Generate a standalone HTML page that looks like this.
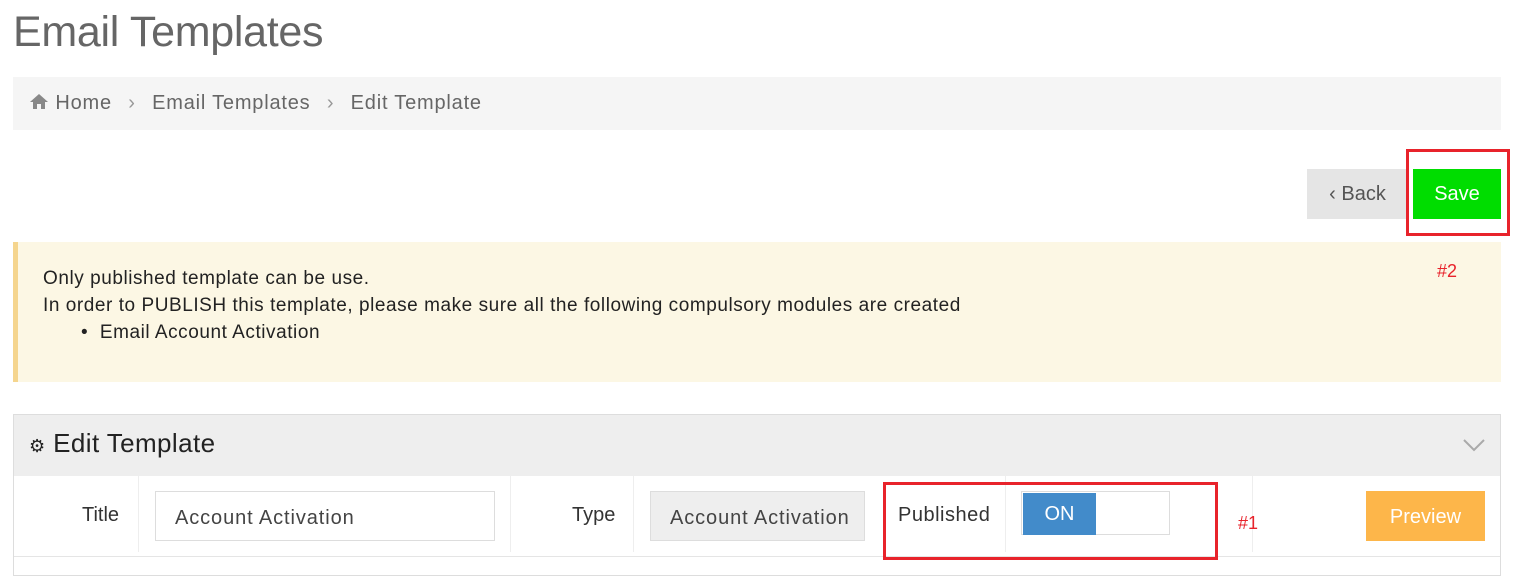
<!DOCTYPE html>
<html><head><style>
body{margin:0;width:1515px;height:568px;background:#fff;font-family:"Liberation Sans",sans-serif;position:relative;overflow:hidden;color:#333}
.a{position:absolute}
</style></head><body>
<div class="a" style="left:13px;top:8px;font-size:43px;color:#666;letter-spacing:-0.3px">Email Templates</div>
<div class="a" style="left:13px;top:77px;width:1488px;height:53px;background:#f5f5f5"></div>
<div class="a" style="left:29px;top:92px;font-size:20px;color:#666;letter-spacing:0.8px;white-space:nowrap">
<svg width="20" height="17" viewBox="0 0 20 17" style="vertical-align:-1px"><path d="M10 1L1 9h3v7h4v-5h4v5h4V9h3z" fill="#888"/></svg> Home <span style="margin:0 10px;color:#999">›</span> Email Templates <span style="margin:0 10px;color:#999">›</span> Edit Template</div>
<div class="a" style="left:1307px;top:169px;width:101px;height:50px;background:#e5e5e5;font-size:20px;color:#555;line-height:50px;text-align:center">‹ Back</div>
<div class="a" style="left:1413px;top:169px;width:88px;height:50px;background:#00dd00;font-size:20px;color:#fff;line-height:50px;text-align:center">Save</div>
<div class="a" style="left:1406px;top:149px;width:98px;height:81px;border:3px solid #e8232b"></div>
<div class="a" style="left:13px;top:242px;width:1483px;height:140px;background:#fcf7e4;border-left:5px solid #f5d58e"></div>
<div class="a" style="left:1437px;top:261px;font-size:18px;color:#e8232b">#2</div>
<div class="a" style="left:43px;top:265px;font-size:19px;letter-spacing:0.55px;line-height:27px;color:#222;white-space:nowrap">Only published template can be use.<br>In order to PUBLISH this template, please make sure all the following compulsory modules are created<br><span style="margin-left:38px">•&nbsp; Email Account Activation</span></div>
<div class="a" style="left:13px;top:414px;width:1486px;height:160px;border:1px solid #ddd"></div>
<div class="a" style="left:14px;top:415px;width:1486px;height:61px;background:#eee"></div>
<div class="a" style="left:29px;top:428px;font-size:26px;letter-spacing:0.4px;color:#222"><span style="font-size:18px">⚙</span> Edit Template</div>
<svg class="a" style="left:1463px;top:438px" width="22" height="14"><path d="M1 2l10 10 10-10" stroke="#aaa" stroke-width="2" fill="none"/></svg>
<div class="a" style="left:14px;top:556px;width:1486px;height:1px;background:#e5e5e5"></div>
<div class="a" style="left:138px;top:476px;width:1px;height:76px;background:#eee"></div>
<div class="a" style="left:510px;top:476px;width:1px;height:76px;background:#eee"></div>
<div class="a" style="left:633px;top:476px;width:1px;height:76px;background:#eee"></div>
<div class="a" style="left:1252px;top:476px;width:1px;height:76px;background:#eee"></div>
<div class="a" style="left:1005px;top:476px;width:1px;height:76px;background:#eee"></div>
<div class="a" style="left:82px;top:504px;font-size:20px">Title</div>
<div class="a" style="left:155px;top:491px;width:340px;height:50px;border:1px solid #ddd;font-size:20px;letter-spacing:0.9px;line-height:52px;padding-left:19px;box-sizing:border-box;color:#444">Account Activation</div>
<div class="a" style="left:572px;top:504px;font-size:20px">Type</div>
<div class="a" style="left:650px;top:491px;width:215px;height:50px;background:#eee;border:1px solid #ddd;box-sizing:border-box;font-size:20px;letter-spacing:0.9px;line-height:52px;padding-left:19px;color:#444;overflow:hidden;white-space:nowrap">Account Activation</div>
<div class="a" style="left:898px;top:504px;font-size:20px;letter-spacing:0.5px">Published</div>
<div class="a" style="left:1021px;top:491px;width:149px;height:44px;border:1px solid #ddd;box-sizing:border-box"></div>
<div class="a" style="left:1023px;top:493px;width:73px;height:42px;background:#428bca;color:#fff;font-size:20px;line-height:42px;text-align:center">ON</div>
<div class="a" style="left:883px;top:482px;width:329px;height:72px;border:3px solid #e8232b"></div>
<div class="a" style="left:1238px;top:513px;font-size:18px;color:#e8232b">#1</div>
<div class="a" style="left:1366px;top:491px;width:119px;height:50px;background:#fdb64a;color:#fff;font-size:20px;line-height:52px;text-align:center">Preview</div>
</body></html>
